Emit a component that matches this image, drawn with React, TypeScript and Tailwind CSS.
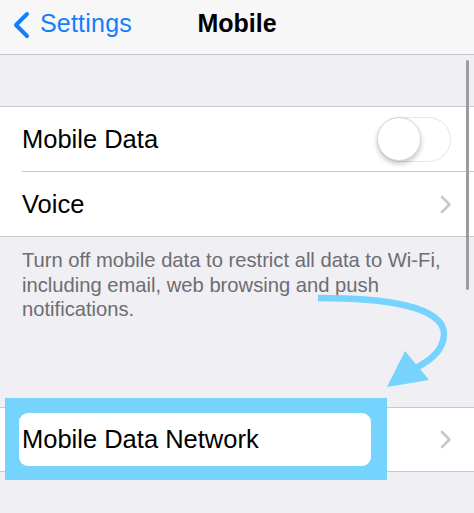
import React from "react";

function Chevron() {
  return (
    <svg width="12" height="19" viewBox="0 0 12 19" className="shrink-0">
      <path d="M2 2 L9.5 9.5 L2 17" fill="none" stroke="#c7c7cc" strokeWidth="2.6" strokeLinecap="round" strokeLinejoin="round" />
    </svg>
  );
}

function Toggle() {
  return (
    <div className="relative w-[74px] h-[45px] rounded-full border-[1.5px] border-[#e5e5ea] bg-white">
      <div className="absolute left-[-1px] top-[-0.5px] w-[44px] h-[44px] rounded-full bg-white border border-[#d6d6d6] shadow-[0_3px_5px_rgba(0,0,0,0.22)]" />
    </div>
  );
}

export default function App() {
  return (
    <div
      className="relative w-[474px] h-[513px] overflow-hidden bg-[#efeff4]"
      style={{ fontFamily: '"Liberation Sans", Arial, sans-serif' }}
    >
      {/* Navigation bar */}
      <div className="relative h-[55px] bg-[#f7f7f8] border-b border-[#c8c7cc] flex items-center pb-[8px]">
        <div className="flex items-center pl-[12px] gap-[9px] text-[#157efb]">
          <svg width="19" height="28" viewBox="0 0 19 28" className="mt-[4px]">
            <path d="M15 3 L4 14 L15 25" fill="none" stroke="#157efb" strokeWidth="4" strokeLinecap="round" strokeLinejoin="round" />
          </svg>
          <span className="text-[25px] leading-none tracking-[0.2px]">Settings</span>
        </div>
        <div className="absolute left-0 right-0 top-0 h-full flex items-center justify-center pb-[8px] pointer-events-none">
          <span className="text-[25px] font-bold leading-none text-black">Mobile</span>
        </div>
      </div>

      {/* Spacer */}
      <div className="h-[52px] border-b border-[#c8c7cc]" />

      {/* Group 1 */}
      <div className="bg-white">
        <div className="h-[64px] flex items-center justify-between pl-[22px] pr-[23px]">
          <span className="text-[25.5px] text-black">Mobile Data</span>
          <Toggle />
        </div>
        <div className="ml-[22px] border-b border-[#c8c7cc]" />
        <div className="h-[64px] flex items-center justify-between pl-[22px] pr-[22px]">
          <span className="text-[25.5px] text-black">Voice</span>
          <Chevron />
        </div>
      </div>
      <div className="border-b border-[#c8c7cc]" />

      {/* Footer */}
      <div className="h-[170px] px-[22px] pt-[11px]">
        <p className="text-[20.2px] leading-[24.5px] text-[#6d6d72]">
          Turn off mobile data to restrict all data to Wi-Fi, including email, web browsing and push notifications.
        </p>
      </div>

      {/* Group 2 */}
      <div className="border-t border-[#c8c7cc] bg-white">
        <div className="h-[63px] flex items-center justify-between pl-[22px] pr-[22px]">
          <span className="text-[25.5px] text-black">Mobile Data Network</span>
          <Chevron />
        </div>
      </div>
      <div className="border-b border-[#c8c7cc]" />

      {/* Highlight frame */}
      <div className="absolute left-[5px] top-[398px] w-[382px] h-[82px] overflow-hidden">
        <div className="absolute left-[14px] top-[15px] w-[352px] h-[53px] rounded-[9px] shadow-[0_0_0_60px_#76d3fd]" />
      </div>

      {/* Arrow */}
      <svg className="absolute left-0 top-0 pointer-events-none" width="474" height="513" viewBox="0 0 474 513">
        <path d="M318 298 C 380 298, 445 305, 444 335 C 443 352, 428 362, 412 370" fill="none" stroke="#76d3fd" strokeWidth="6.5" />
        <polygon points="405,351 429,380 387,387" fill="#76d3fd" />
      </svg>

      {/* Scroll indicator */}
      <div className="absolute left-[465.5px] top-[60px] w-[3px] h-[230px] rounded-full bg-[#9c9c9c]" />
    </div>
  );
}
